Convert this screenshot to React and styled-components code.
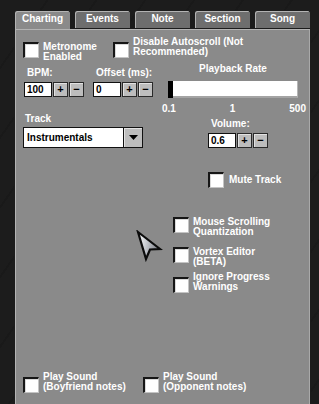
import React from "react"
import styled, { createGlobalStyle } from "styled-components"

const tabs = ["Charting", "Events", "Note", "Section", "Song"]

const Checkbox = ({ label, shift = 0, gap = 4 }) => (
  <CheckItem $gap={gap}>
    <Box />
    <CheckLabel $shift={shift}>{label}</CheckLabel>
  </CheckItem>
)

const Stepper = ({ label, value }) => (
  <Field>
    <FieldLabel>{label}</FieldLabel>
    <StepperRow>
      <NumberInput>{value}</NumberInput>
      <StepButton>+</StepButton>
      <StepButton>−</StepButton>
    </StepperRow>
  </Field>
)

const App = () => (
  <>
    <GlobalStyle />
    <Screen>
      <TabBar>
        {tabs.map((t, i) => (
          <Tab key={t} $active={i === 0}>
            {t}
          </Tab>
        ))}
      </TabBar>
      <Panel>
        <Row $left={8}>
          <Slot $width={90}>
            <Checkbox label={<>Metronome<br />Enabled</>} />
          </Slot>
          <Checkbox label={<>Disable Autoscroll (Not<br />Recommended)</>} shift={-5} />
        </Row>

        <Row $top={2} $left={9}>
          <StepperGroup>
            <Stepper label="BPM:" value="100" />
            <Stepper label="Offset (ms):" value="0" />
          </StepperGroup>
          <Playback>
            <CenterLabel>Playback Rate</CenterLabel>
            <RateBar>
              <RateHandle />
            </RateBar>
            <Ticks>
              <span>0.1</span>
              <span>1</span>
              <span>500</span>
            </Ticks>
          </Playback>
        </Row>

        <Row $left={8}>
          <TrackField>
            <FieldLabel $indent={2}>Track</FieldLabel>
            <Dropdown>
              <DropdownText>Instrumentals</DropdownText>
              <DropdownButton>
                <svg width="9" height="5" viewBox="0 0 9 5">
                  <path d="M0 0h9L4.5 5z" fill="#000" />
                </svg>
              </DropdownButton>
            </Dropdown>
          </TrackField>
          <VolumeField>
            <Stepper label="Volume:" value="0.6" />
          </VolumeField>
        </Row>

        <Row $top={24} $left={193} $center>
          <Checkbox label="Mute Track" gap={5} />
        </Row>

        <OptionList>
          <Checkbox label={<>Mouse Scrolling<br />Quantization</>} />
          <Checkbox label={<>Vortex Editor<br />(BETA)</>} />
          <Checkbox label={<>Ignore Progress<br />Warnings</>} shift={-5} />
        </OptionList>

        <Row $top={84} $left={8}>
          <Slot $width={120}>
            <Checkbox label={<>Play Sound<br />(Boyfriend notes)</>} shift={-5} />
          </Slot>
          <Checkbox label={<>Play Sound<br />(Opponent notes)</>} shift={-5} />
        </Row>
      </Panel>
      <Cursor width="27" height="32" viewBox="0 0 27 32">
        <defs>
          <linearGradient id="cur" x1="0" y1="0" x2="1" y2="0.3">
            <stop offset="0" stopColor="#ffffff" />
            <stop offset="0.45" stopColor="#c9ccd2" />
            <stop offset="1" stopColor="#7e8188" />
          </linearGradient>
        </defs>
        <path
          d="M2 2 L24 19 L14 19.5 L10 29 Z"
          fill="url(#cur)"
          stroke="#0c0c0c"
          strokeWidth="2.2"
          strokeLinejoin="miter"
        />
      </Cursor>
    </Screen>
  </>
)

const GlobalStyle = createGlobalStyle`
  html, body {
    margin: 0;
    padding: 0;
    background: #191919;
  }
  body {
    width: 319px;
    height: 404px;
    overflow: hidden;
    font-family: "Liberation Sans", Arial, sans-serif;
  }
`

const Screen = styled.div`
  position: relative;
  width: 319px;
  height: 404px;
  box-sizing: border-box;
  padding: 10px 0 0 14px;
  background:
    repeating-linear-gradient(125deg, transparent 0 38px, rgba(0, 0, 0, 0.12) 38px 40px),
    #1c1c1c;
`

const TabBar = styled.div`
  display: flex;
  gap: 3px;
  width: 297px;
  height: 18px;
  align-items: flex-start;
`

const Tab = styled.div`
  width: 57px;
  height: ${(p) => (p.$active ? "19px" : "18px")};
  box-sizing: border-box;
  border: 1px solid #1c1c1c;
  border-bottom: none;
  border-radius: 3px 3px 0 0;
  background: ${(p) => (p.$active ? "#8a8a8a" : "#6e6e6e")};
  box-shadow: inset 1px 1px 0 #b3b3b3;
  color: #fff;
  font-weight: bold;
  font-size: 10px;
  line-height: 16px;
  text-align: center;
  position: relative;
  z-index: ${(p) => (p.$active ? 1 : 0)};
`

const Panel = styled.div`
  width: 297px;
  height: 390px;
  box-sizing: border-box;
  background: #8a8a8a;
  border: 1px solid #1c1c1c;
  box-shadow: inset 1px 1px 0 #b3b3b3, inset -1px 0 0 #a9a9a9;
  padding-top: 13px;
  display: flex;
  flex-direction: column;
  color: #fff;
  font-weight: bold;
  font-size: 10px;
  line-height: 10px;
`

const Row = styled.div`
  display: flex;
  align-items: ${(p) => (p.$center ? "center" : "flex-start")};
  margin-top: ${(p) => p.$top || 0}px;
  padding-left: ${(p) => p.$left || 0}px;
`

const Slot = styled.div`
  width: ${(p) => p.$width}px;
  flex: none;
`

const CheckItem = styled.div`
  display: flex;
  align-items: ${(p) => (p.$gap === 5 ? "center" : "flex-start")};
  gap: ${(p) => p.$gap}px;
`

const Box = styled.div`
  width: 16px;
  height: 16px;
  flex: none;
  box-sizing: border-box;
  background: #fff;
  border-style: solid;
  border-width: 2px 1px 1px 2px;
  border-color: #161616 #c4c4c4 #c4c4c4 #161616;
  box-shadow: inset 1px 1px 0 #d9d9d9;
`

const CheckLabel = styled.div`
  margin-top: ${(p) => p.$shift}px;
  white-space: nowrap;
`

const StepperGroup = styled.div`
  display: flex;
  gap: 9px;
  width: 138px;
  padding-top: 4px;
  flex: none;
`

const Field = styled.div`
  display: flex;
  flex-direction: column;
  gap: 4px;
`

const FieldLabel = styled.div`
  padding-left: ${(p) => (p.$indent ?? 3)}px;
  white-space: nowrap;
`

const StepperRow = styled.div`
  display: flex;
  gap: 1px;
  height: 15px;
`

const NumberInput = styled.div`
  width: 28px;
  box-sizing: border-box;
  background: #fff;
  border: 1px solid #111;
  color: #000;
  padding-left: 2px;
  line-height: 13px;
`

const StepButton = styled.div`
  width: 15px;
  box-sizing: border-box;
  background: #bdbdbd;
  border: 1px solid #2a2a2a;
  box-shadow: inset 1px 1px 0 #e2e2e2;
  color: #000;
  font-size: 11px;
  line-height: 12px;
  text-align: center;
`

const Playback = styled.div`
  width: 145px;
  display: flex;
  flex-direction: column;
`

const CenterLabel = styled.div`
  text-align: center;
  padding-right: 3px;
`

const RateBar = styled.div`
  margin: 7px 9px 0 6px;
  height: 17px;
  box-sizing: border-box;
  background: #fff;
  border-bottom: 2px solid #a4a4a4;
  border-right: 1px solid #b5b5b5;
  display: flex;
`

const RateHandle = styled.div`
  width: 5px;
  height: 17px;
  background: #000;
`

const Ticks = styled.div`
  margin-top: 6px;
  display: flex;
  justify-content: space-between;
  padding-right: 1px;
`

const TrackField = styled.div`
  width: 120px;
  display: flex;
  flex-direction: column;
  gap: 3px;
  flex: none;
`

const Dropdown = styled.div`
  height: 21px;
  box-sizing: border-box;
  background: #fff;
  border: 1px solid #111;
  display: flex;
  align-items: stretch;
`

const DropdownText = styled.div`
  flex: 1;
  color: #000;
  padding-left: 3px;
  line-height: 19px;
`

const DropdownButton = styled.div`
  width: 18px;
  background: #bdbdbd;
  border-left: 1px solid #111;
  box-shadow: inset 1px 1px 0 #e2e2e2;
  display: flex;
  align-items: center;
  justify-content: center;
`

const VolumeField = styled.div`
  margin-left: 65px;
  padding-top: 5px;
`

const OptionList = styled.div`
  display: flex;
  flex-direction: column;
  gap: 10px;
  margin-top: 29px;
  padding-left: 158px;
`

const Cursor = styled.svg`
  position: absolute;
  left: 136px;
  top: 230px;
`

export default App
